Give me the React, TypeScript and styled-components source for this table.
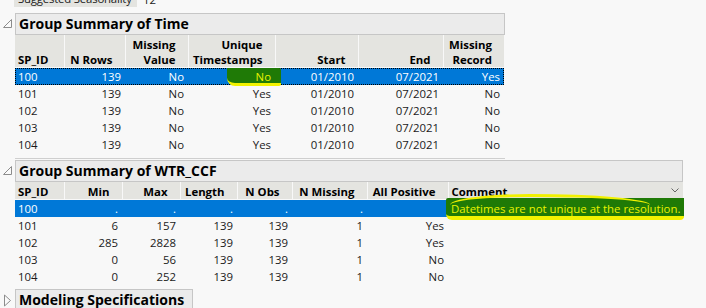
import React from "react";
import styled, { createGlobalStyle } from "styled-components";

const GlobalStyle = createGlobalStyle`
  html, body {
    margin: 0;
    padding: 0;
    background: #f8f8f8;
    overflow: hidden;
  }
  body {
    font-family: "Open Sans", "Noto Sans", sans-serif;
    font-size: 11.4px;
    color: #1a1a1a;
  }
`;

type Align = "left" | "right";
type Column = { label: React.ReactNode; width: number; align: Align };
type Cell = React.ReactNode;

const timeColumns: Column[] = [
  { label: "SP_ID", width: 49, align: "left" },
  { label: "N Rows", width: 61, align: "right" },
  { label: <>Missing<br />Value</>, width: 63, align: "right" },
  { label: <>Unique<br />Timestamps</>, width: 87, align: "right" },
  { label: "Start", width: 83, align: "right" },
  { label: "End", width: 85, align: "right" },
  { label: <>Missing<br />Record</>, width: 61, align: "right" },
];

const ccfColumns: Column[] = [
  { label: "SP_ID", width: 49, align: "left" },
  { label: "Min", width: 58, align: "right" },
  { label: "Max", width: 58, align: "right" },
  { label: "Length", width: 57, align: "right" },
  { label: "N Obs", width: 55, align: "right" },
  { label: "N Missing", width: 75, align: "right" },
  { label: "All Positive", width: 81, align: "right" },
  { label: "Comment", width: 235, align: "left" },
];

const Page = styled.div`
  display: flex;
  flex-direction: column;
`;

const ParamRow = styled.div`
  display: flex;
  align-items: center;
  gap: 6px;
  margin-top: -9px;
  padding-left: 14px;
  height: 16px;
`;

const ParamLabel = styled.div`
  width: 119px;
  height: 16px;
  padding-left: 4px;
  background: #e4e4e0;
  line-height: 16px;
  letter-spacing: -0.2px;
  white-space: nowrap;
  overflow: hidden;
`;

const Section = styled.section<{ $gap: number }>`
  display: grid;
  grid-template-columns: 15px auto;
  margin-top: ${(p) => p.$gap}px;
  justify-content: start;
`;

const Toggle = styled.div`
  display: flex;
  justify-content: center;
  padding-top: 5px;
`;

const Body = styled.div`
  display: flex;
  flex-direction: column;
`;

const OutlineHeader = styled.div<{ $width: number }>`
  width: ${(p) => p.$width}px;
  box-sizing: border-box;
  height: 22px;
  padding-left: 3px;
  background: #ebebeb;
  border: 1px solid #c6c6c6;
  font-size: 14px;
  font-weight: 700;
  line-height: 20px;
  color: #000;
  white-space: nowrap;
`;

const Content = styled.div<{ $rule?: boolean }>`
  padding-bottom: ${(p) => (p.$rule ? 5 : 0)}px;
  border-bottom: ${(p) => (p.$rule ? "1px solid #cfcfcf" : "none")};
`;

const Table = styled.table`
  border-collapse: collapse;
  table-layout: fixed;
`;

const Th = styled.th<{ $align: Align; $tall: boolean }>`
  height: ${(p) => (p.$tall ? 32 : 17)}px;
  padding: 0 ${(p) => (p.$align === "right" ? 12 : 3)}px 0 3px;
  background: #e4e4e0;
  border-left: 1px solid #f8f8f8;
  border-bottom: 1px solid #f8f8f8;
  text-align: ${(p) => p.$align};
  vertical-align: bottom;
  font-weight: 700;
  line-height: 15px;
  color: #000;
  white-space: nowrap;
  position: relative;
  &:first-child {
    border-left: none;
  }
`;

const Row = styled.tr<{ $selected?: boolean; $focused?: boolean }>`
  background: ${(p) => (p.$selected ? "#0078d7" : "transparent")};
  color: ${(p) => (p.$selected ? "#fff" : "#1a1a1a")};
  outline: ${(p) => (p.$focused ? "1px dotted #000" : "none")};
  outline-offset: -1px;
`;

const Td = styled.td<{ $align: Align }>`
  height: 17px;
  padding: 0 4px 0 3px;
  text-align: ${(p) => p.$align};
  line-height: 17px;
  white-space: nowrap;
  position: relative;
`;

/* yellow marker pen strokes over selected cells */
const Marked = styled.div`
  position: absolute;
  top: 0;
  bottom: -1px;
  right: -6px;
  width: 44px;
  background: #1f7a06;
  color: #e8f200;
  padding-right: 10px;
  border-bottom: 3px solid #f2f200;
  border-radius: 0 2px 2px 8px;
`;

const MarkedComment = styled.div`
  position: absolute;
  inset: -2px -1px -3px -2px;
  padding: 2px 0 0 5px;
  text-align: left;
  background: #1f7a06;
  color: #e8f200;
  border-bottom: 4px solid #f2f200;
  border-radius: 2px 0 4px 6px;
  &::before {
    content: "";
    position: absolute;
    left: 4px;
    top: -4px;
    width: 200px;
    height: 8px;
    border-top: 3px solid #f2f200;
    border-radius: 40% 60% 0 0 / 100% 100% 0 0;
  }
`;

const SortMark = styled.svg`
  position: absolute;
  right: 4px;
  top: 6px;
`;

const DownRightTriangle = () => (
  <svg width="10" height="11" viewBox="0 0 10 11">
    <path d="M8.5 1.5 L8.5 9.5 L0.5 9.5 Z" fill="#fafafa" stroke="#8c8c8c" />
  </svg>
);

const RightTriangle = () => (
  <svg width="9" height="13" viewBox="0 0 9 13">
    <path d="M1.5 1 L7.5 6.5 L1.5 12 Z" fill="#fafafa" stroke="#8c8c8c" />
  </svg>
);

const timeRows: Cell[][] = [
  ["100", "139", "No", <Marked key="m">No</Marked>, "01/2010", "07/2021", "Yes"],
  ["101", "139", "No", "Yes", "01/2010", "07/2021", "No"],
  ["102", "139", "No", "Yes", "01/2010", "07/2021", "No"],
  ["103", "139", "No", "Yes", "01/2010", "07/2021", "No"],
  ["104", "139", "No", "Yes", "01/2010", "07/2021", "No"],
];

const ccfRows: Cell[][] = [
  [
    "100", ".", ".", ".", ".", ".", "",
    <MarkedComment key="c">Datetimes are not unique at the resolution.</MarkedComment>,
  ],
  ["101", "6", "157", "139", "139", "1", "Yes", ""],
  ["102", "285", "2828", "139", "139", "1", "Yes", ""],
  ["103", "0", "56", "139", "139", "1", "No", ""],
  ["104", "0", "252", "139", "139", "1", "No", ""],
];

const DataTable: React.FC<{
  columns: Column[];
  rows: Cell[][];
  tallHeader: boolean;
  focusFirst?: boolean;
  menuLast?: boolean;
}> = ({ columns, rows, tallHeader, focusFirst, menuLast }) => (
  <Table style={{ width: columns.reduce((s, c) => s + c.width, 0) }}>
    <colgroup>
      {columns.map((c, i) => (
        <col key={i} style={{ width: c.width }} />
      ))}
    </colgroup>
    <thead>
      <tr>
        {columns.map((c, i) => (
          <Th key={i} $align={c.align} $tall={tallHeader}>
            {c.label}
            {menuLast && i === columns.length - 1 && (
              <SortMark width="8" height="5" viewBox="0 0 8 5">
                <path d="M0.5 0.5 L4 4 L7.5 0.5" fill="none" stroke="#666" />
              </SortMark>
            )}
          </Th>
        ))}
      </tr>
    </thead>
    <tbody>
      {rows.map((r, ri) => (
        <Row key={ri} $selected={ri === 0} $focused={focusFirst && ri === 0}>
          {r.map((cell, ci) => (
            <Td key={ci} $align={columns[ci].align}>
              {cell}
            </Td>
          ))}
        </Row>
      ))}
    </tbody>
  </Table>
);

export default function App() {
  return (
    <Page>
      <GlobalStyle />
      <ParamRow>
        <ParamLabel>Suggested Seasonality</ParamLabel>
        <span>12</span>
      </ParamRow>

      <Section $gap={6}>
        <Toggle>
          <DownRightTriangle />
        </Toggle>
        <Body>
          <OutlineHeader $width={490}>Group Summary of Time</OutlineHeader>
          <Content $rule>
            <DataTable columns={timeColumns} rows={timeRows} tallHeader focusFirst />
          </Content>
        </Body>
      </Section>

      <Section $gap={1}>
        <Toggle>
          <DownRightTriangle />
        </Toggle>
        <Body>
          <OutlineHeader $width={668}>Group Summary of WTR_CCF</OutlineHeader>
          <Content>
            <DataTable columns={ccfColumns} rows={ccfRows} tallHeader={false} menuLast />
          </Content>
        </Body>
      </Section>

      <Section $gap={4}>
        <Toggle>
          <RightTriangle />
        </Toggle>
        <Body>
          <OutlineHeader $width={178}>Modeling Specifications</OutlineHeader>
        </Body>
      </Section>
    </Page>
  );
}
